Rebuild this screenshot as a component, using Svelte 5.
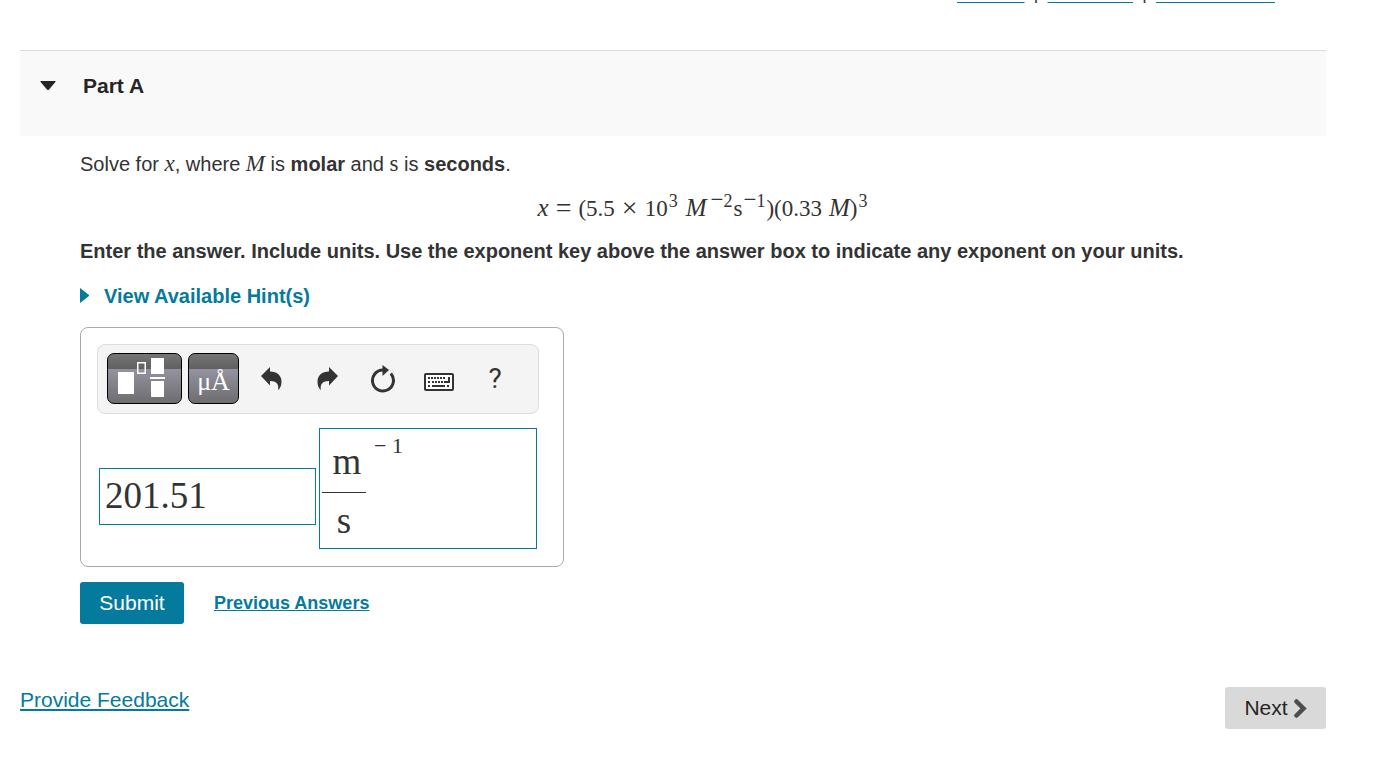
<script>
	let value = $state('201.51');
	let open = $state(true);

	const resources = ['Review ', 'Constants', 'Periodic Table'];
	const keyRows = [
		{ y: 5, xs: [4, 7, 10, 13, 16, 19] },
		{ y: 9, xs: [4, 8, 11, 14, 17, 20] },
		{ y: 13, xs: [4, 23] }
	];
</script>

<div class="page">
	<nav class="resources" aria-label="Resources">
		{#each resources as name, i (name)}
			{#if i > 0}<span class="bar">|</span>{/if}
			<a href="#resources">{name}</a>
		{/each}
	</nav>

	<section>
		<header class="part-header">
			<button class="toggle" aria-label="Toggle Part A" onclick={() => (open = !open)}>
				<svg width="16" height="10" viewBox="0 0 16 10"><path d="M1 0h14q1 0 .4 1L9 8.400q-1 1-2 0L.6 1Q0 0 1 0z" fill="#252525" /></svg>
			</button>
			<h2>Part A</h2>
		</header>

		{#if open}
			<div class="part-body">
				<p>
					Solve for <i class="math">x</i>, where <i class="math">M</i> is <b>molar</b> and
					<span class="math">s</span> is <b>seconds</b>.
				</p>
				<div class="equation math">
					<i>x</i><span class="op">=</span>(5.5<span class="op">×</span>10<sup>3</sup><i class="unit">M</i><sup class="wide"><span class="minus">−</span>2</sup>s<sup><span class="minus">−</span>1</sup>)(0.33<i class="unit">M</i>)<sup>3</sup>
				</div>
				<p><b>Enter the answer. Include units. Use the exponent key above the answer box to indicate any exponent on your units.</b></p>
				<a class="hints" href="#hints">
					<svg width="10" height="16" viewBox="0 0 10 16"><path d="M0 0l9 7v1L0 15z" fill="#047a9c" /></svg>
					View Available Hint(s)
				</a>

				<div class="answer-box">
					<div class="toolbar" role="toolbar" aria-label="Math tools">
						<button class="palette templates" aria-label="Templates">
							<svg width="73" height="49" viewBox="0 0 73 49">
								<path d="M10 18h16v22H10zM43 4h13v16H43zM43 27h13v16H43zM42 23h15v2H42z" fill="#fff" />
								<path d="M29.750 8.750h7.500v10.500h-7.500z" fill="none" stroke="#fff" stroke-width="1.500" />
							</svg>
						</button>
						<button class="palette symbols">μÅ</button>
						<button class="tool" aria-label="Undo">
							<svg width="21" height="24" viewBox="0 0 21 24"><path d="M0 9L9 0v4.500c7 0 11.500 4 11.500 10 0 4-1 6.500-3.500 8.800 1-4.500 0-9.300-8-9.300v4.500z" fill="#333" /></svg>
						</button>
						<button class="tool" aria-label="Redo">
							<svg width="21" height="24" viewBox="0 0 21 24"><path d="M21 9L12 0v4.500C5 4.500.5 8.500.5 14.500c0 4 1 6.500 3.500 8.800C3 18.800 4 14 12 14v4.500z" fill="#333" /></svg>
						</button>
						<button class="tool" aria-label="Reset">
							<svg width="26" height="28" viewBox="0 0 26 28">
								<path d="M20.800 8.500A10.500 10.500 0 1 1 13 5" fill="none" stroke="#333" stroke-width="3" />
								<path d="M12.500 0l6.500 5-6.500 6z" fill="#333" />
							</svg>
						</button>
						<button class="tool keyboard" aria-label="Keyboard shortcuts">
							<svg width="30" height="18" viewBox="0 0 30 18">
								<rect x="1" y="1" width="28" height="16" rx="1" fill="#fff" stroke="#333" stroke-width="2" />
								<g fill="#333">
									{#each keyRows as row (row.y)}
										{#each row.xs as x (x)}
											<rect {x} y={row.y - 1} width="2" height="2" />
										{/each}
									{/each}
									<path d="M8 12h13v2H8zM24 4h2v6h-4V8h2z" />
								</g>
							</svg>
						</button>
						<button class="tool help" aria-label="Help">?</button>
					</div>

					<div class="fields">
						<input class="value" type="text" aria-label="Value" bind:value />
						<div class="units" role="textbox" tabindex="0" aria-label="Units">
							<span class="fraction">
								<span class="num">m</span>
								<span class="den">s</span>
							</span>
							<span class="exponent">− 1</span>
						</div>
					</div>
				</div>

				<div class="actions">
					<button class="submit">Submit</button>
					<a class="previous" href="#previous">Previous Answers</a>
				</div>
			</div>
		{/if}
	</section>

	<footer>
		<a class="feedback" href="#feedback">Provide Feedback</a>
		<button class="next">
			Next
			<svg width="13" height="19" viewBox="0 0 13 19"><path d="M2.500 2.500l7 7-7 7" fill="none" stroke="#4d4d4d" stroke-width="4.500" stroke-linecap="round" /></svg>
		</button>
	</footer>
</div>

<style>
	:global(body) {
		margin: 0;
		background: #fff;
	}

	.page {
		padding: 0 61px 32px 20px;
		font-family: 'Liberation Sans', Arial, sans-serif;
		font-size: 20px;
		line-height: 28px;
		color: #333;
	}

	button {
		font-family: inherit;
		border: 0;
		padding: 0;
		cursor: pointer;
	}

	svg {
		display: block;
	}

	a {
		color: #047a9c;
	}

	/* only the tail of this row is scrolled into view */
	.resources {
		display: flex;
		justify-content: flex-end;
		align-items: flex-end;
		gap: 9px;
		height: 4px;
		margin-bottom: 46px;
		padding-right: 51px;
		overflow: hidden;
		font-size: 19px;
		line-height: 22px;
	}

	.resources a {
		white-space: pre;
		text-decoration-thickness: 1px;
		text-underline-offset: 3px;
	}

	.part-header {
		display: flex;
		align-items: flex-start;
		gap: 27px;
		box-sizing: border-box;
		height: 86px;
		padding: 21px 20px;
		border-top: 1px solid #ddd;
		background: #f9f9f9;
		color: #252525;
	}

	.toggle {
		margin-top: 9px;
		background: none;
	}

	h2 {
		margin: 0;
		font-size: 21px;
		line-height: 28px;
	}

	.part-body {
		padding: 14px 0 0 60px;
	}

	p {
		margin: 0;
	}

	.math {
		font-family: 'Liberation Serif', 'Times New Roman', serif;
		font-size: 23px;
		line-height: 20px;
	}

	.equation {
		margin: 21px 0 18px;
		text-align: center;
		white-space: nowrap;
	}

	.equation i {
		font-size: 25px;
		line-height: 0;
	}

	sup {
		margin: 0 1px;
		font-size: 18px;
		line-height: 0;
	}

	.wide {
		margin-left: 4px;
	}

	.minus {
		font-size: 23px;
	}

	.op {
		margin: 0 7px;
		font-size: 28px;
		line-height: 0;
		vertical-align: -1px;
	}

	.unit {
		margin-left: 7px;
	}

	.hints {
		display: flex;
		align-items: center;
		gap: 14px;
		margin: 17px 0;
		font-weight: bold;
		text-decoration: none;
	}

	.answer-box {
		box-sizing: border-box;
		width: 484px;
		max-width: 100%;
		padding: 16px 24px 17px 16px;
		border: 1px solid #aaa;
		border-radius: 8px;
	}

	.toolbar {
		display: flex;
		align-items: center;
		padding: 8px 9px 9px;
		border: 1px solid #ddd;
		border-radius: 8px;
		background: #f4f4f4;
	}

	.palette {
		box-sizing: border-box;
		height: 51px;
		border: 1px solid #000;
		border-radius: 7px;
		background: linear-gradient(#757575, #606060 30%, #95939f 30%, #6d6d70);
		color: #fff;
	}

	.templates {
		width: 75px;
		margin-right: 6px;
	}

	.symbols {
		width: 51px;
		margin-right: 4px;
		padding-top: 6px;
		font-family: 'Liberation Serif', 'Times New Roman', serif;
		font-size: 26px;
	}

	.tool {
		display: flex;
		justify-content: center;
		width: 56px;
		background: none;
		color: #333;
	}

	.keyboard {
		padding-top: 6px;
	}

	.help {
		font-family: Roboto, sans-serif;
		font-size: 28px;
	}

	.fields {
		display: flex;
		align-items: flex-end;
		gap: 3px;
		margin: 14px 0 0 2px;
		font-family: 'Liberation Serif', 'Times New Roman', serif;
		font-size: 37px;
	}

	.value {
		box-sizing: border-box;
		width: 217px;
		height: 57px;
		margin-bottom: 24px;
		padding: 0 5px 2px;
		border: 1px solid #047a9c;
		font: inherit;
		color: #333;
	}

	.units {
		display: flex;
		align-items: flex-start;
		gap: 8px;
		box-sizing: border-box;
		width: 218px;
		height: 121px;
		padding: 7px 2px;
		border: 1px solid #047a9c;
	}

	.fraction {
		display: flex;
		flex-direction: column;
		width: 44px;
		text-align: center;
		line-height: 56px;
	}

	.num {
		padding: 0 0 4px 6px;
		border-bottom: 1px solid #333;
		line-height: 52px;
	}

	.exponent {
		font-size: 22px;
		line-height: 20px;
	}

	.actions {
		display: flex;
		align-items: center;
		gap: 30px;
		margin-top: 15px;
	}

	.submit {
		width: 104px;
		height: 42px;
		border-radius: 3px;
		background: #047a9c;
		color: #fff;
		font-size: 21px;
	}

	.previous {
		font-size: 18px;
		font-weight: bold;
		line-height: 24px;
	}

	footer {
		display: flex;
		justify-content: space-between;
		align-items: flex-start;
		margin-top: 63px;
	}

	.feedback {
		font-size: 21px;
		line-height: 26px;
	}

	.next {
		display: flex;
		align-items: center;
		justify-content: center;
		gap: 6px;
		width: 101px;
		height: 42px;
		border-radius: 3px;
		background: #d9d9d9;
		color: #252525;
		font-size: 21px;
	}
</style>
